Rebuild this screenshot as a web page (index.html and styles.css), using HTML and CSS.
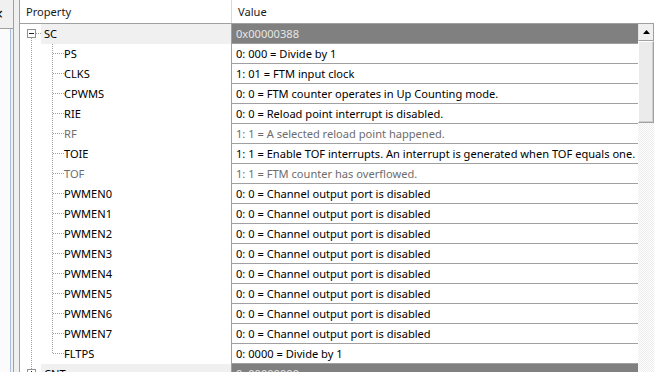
FILE: index.html
```html
<!DOCTYPE html>
<html>
<head>
<meta charset="utf-8">
<link rel="stylesheet" href="styles.css">
</head>
<body>
<div class="app">
  <div class="side">
    <div class="side-a">
      <div class="side-top"><span class="close">×</span></div>
      <div class="side-rest"></div>
    </div>
    <div class="side-b"></div>
  </div>
  <div class="grid">
    <div class="head">
      <div class="h-name">Property</div>
      <div class="h-val">Value</div>
    </div>
    <div class="body">
      <div class="rows">
        <div class="row group">
          <div class="name"><span class="g1 first"><span class="box minus"></span></span><span class="label">SC</span></div>
          <div class="val">0x00000388</div>
        </div>
        <div class="row">
          <div class="name"><span class="g1"></span><span class="g2"></span><span class="label">PS</span></div>
          <div class="val">0: 000 = Divide by 1</div>
        </div>
        <div class="row">
          <div class="name"><span class="g1"></span><span class="g2"></span><span class="label">CLKS</span></div>
          <div class="val">1: 01 = FTM input clock</div>
        </div>
        <div class="row">
          <div class="name"><span class="g1"></span><span class="g2"></span><span class="label">CPWMS</span></div>
          <div class="val">0: 0 = FTM counter operates in Up Counting mode.</div>
        </div>
        <div class="row">
          <div class="name"><span class="g1"></span><span class="g2"></span><span class="label">RIE</span></div>
          <div class="val">0: 0 = Reload point interrupt is disabled.</div>
        </div>
        <div class="row dis">
          <div class="name"><span class="g1"></span><span class="g2"></span><span class="label">RF</span></div>
          <div class="val">1: 1 = A selected reload point happened.</div>
        </div>
        <div class="row">
          <div class="name"><span class="g1"></span><span class="g2"></span><span class="label">TOIE</span></div>
          <div class="val">1: 1 = Enable TOF interrupts. An interrupt is generated when TOF equals one.</div>
        </div>
        <div class="row dis">
          <div class="name"><span class="g1"></span><span class="g2"></span><span class="label">TOF</span></div>
          <div class="val">1: 1 = FTM counter has overflowed.</div>
        </div>
        <div class="row">
          <div class="name"><span class="g1"></span><span class="g2"></span><span class="label">PWMEN0</span></div>
          <div class="val">0: 0 = Channel output port is disabled</div>
        </div>
        <div class="row">
          <div class="name"><span class="g1"></span><span class="g2"></span><span class="label">PWMEN1</span></div>
          <div class="val">0: 0 = Channel output port is disabled</div>
        </div>
        <div class="row">
          <div class="name"><span class="g1"></span><span class="g2"></span><span class="label">PWMEN2</span></div>
          <div class="val">0: 0 = Channel output port is disabled</div>
        </div>
        <div class="row">
          <div class="name"><span class="g1"></span><span class="g2"></span><span class="label">PWMEN3</span></div>
          <div class="val">0: 0 = Channel output port is disabled</div>
        </div>
        <div class="row">
          <div class="name"><span class="g1"></span><span class="g2"></span><span class="label">PWMEN4</span></div>
          <div class="val">0: 0 = Channel output port is disabled</div>
        </div>
        <div class="row">
          <div class="name"><span class="g1"></span><span class="g2"></span><span class="label">PWMEN5</span></div>
          <div class="val">0: 0 = Channel output port is disabled</div>
        </div>
        <div class="row">
          <div class="name"><span class="g1"></span><span class="g2"></span><span class="label">PWMEN6</span></div>
          <div class="val">0: 0 = Channel output port is disabled</div>
        </div>
        <div class="row">
          <div class="name"><span class="g1"></span><span class="g2"></span><span class="label">PWMEN7</span></div>
          <div class="val">0: 0 = Channel output port is disabled</div>
        </div>
        <div class="row">
          <div class="name"><span class="g1"></span><span class="g2 last"></span><span class="label">FLTPS</span></div>
          <div class="val">0: 0000 = Divide by 1</div>
        </div>
        <div class="row group">
          <div class="name"><span class="g1 mid"><span class="box plus"></span></span><span class="label">CNT</span></div>
          <div class="val">0x00000000</div>
        </div>
      </div>
      <div class="scroll">
        <div class="sb-btn"><svg width="7" height="4" viewBox="0 0 7 4"><path d="M0 4 L3.5 0 L7 4 Z" fill="#000"/></svg></div>
        <div class="sb-thumb"></div>
        <div class="sb-track"></div>
      </div>
    </div>
  </div>
</div>
</body>
</html>
```

FILE: styles.css
```css
* { box-sizing: border-box; }
html, body {
  margin: 0;
  padding: 0;
  width: 654px;
  height: 372px;
  overflow: hidden;
  background: #fff;
  font-family: "Noto Sans", "Open Sans", sans-serif;
  font-size: 11.1px;
  color: #000;
}
.app {
  display: flex;
  width: 654px;
  height: 372px;
}
.side {
  width: 20px;
  display: flex;
  flex: none;
}
.side-a {
  width: 14px;
  display: flex;
  flex-direction: column;
  border-right: 1px solid #a0a0a0;
}
.side-top {
  height: 29px;
  background: #f0f0f0;
  border-bottom: 1px solid #a0a0a0;
  overflow: hidden;
  line-height: 28px;
  font-size: 16px;
}
.close {
  display: inline-block;
  margin-left: -6px;
  color: #000;
}
.side-rest {
  flex: 1;
  background: linear-gradient(to right, #fbfbfb 0 10px, #a9bfdc 10px 11px, #f0f0f0 11px);
}
.side-b {
  width: 6px;
  background: #f0f0f0;
  border-right: 1px solid #a0a0a0;
}
.grid {
  flex: 1;
  display: flex;
  flex-direction: column;
  min-width: 0;
}
.head {
  height: 24px;
  display: flex;
  border-bottom: 1px solid #a0a0a0;
  line-height: 23px;
  color: #1a1a1a;
}
.h-name {
  width: 212px;
  padding-left: 6px;
  border-right: 1px solid #d9d9d9;
}
.h-val {
  flex: 1;
  padding-left: 6px;
}
.body {
  flex: 1;
  display: flex;
  min-height: 0;
}
.rows {
  flex: 1;
  overflow: hidden;
}
.row {
  display: flex;
  height: 20px;
  line-height: 19px;
}
.name {
  width: 211px;
  display: flex;
  flex: none;
  white-space: nowrap;
}
.val {
  flex: 1;
  border-left: 1px solid #a0a0a0;
  border-bottom: 1px solid #a0a0a0;
  padding-left: 4px;
  white-space: nowrap;
  overflow: hidden;
}
.label { padding-left: 0; }
.group .label {
  flex: 1;
  background: #f0f0f0;
  padding-left: 3px;
}
.group .val {
  background: #808080;
  color: #e6e6e6;
}
.dis .label, .dis .val { color: #6d6d6d; }

.g1, .g2 {
  display: flex;
  align-items: center;
  flex: none;
  height: 20px;
  background-repeat: no-repeat;
}
.g1 {
  width: 21px;
  background-image: repeating-linear-gradient(to bottom, #a0a0a0 0 1px, transparent 1px 2px);
  background-size: 1px 20px;
  background-position: 11px 0;
}
.g1.first {
  background-image:
    repeating-linear-gradient(to bottom, #a0a0a0 0 1px, transparent 1px 2px),
    repeating-linear-gradient(to right, #a0a0a0 0 1px, transparent 1px 2px);
  background-size: 1px 6px, 6px 1px;
  background-position: 11px 14px, 16px 9px;
}
.g1.mid {
  background-image:
    repeating-linear-gradient(to bottom, #a0a0a0 0 1px, transparent 1px 2px),
    repeating-linear-gradient(to bottom, #a0a0a0 0 1px, transparent 1px 2px),
    repeating-linear-gradient(to right, #a0a0a0 0 1px, transparent 1px 2px);
  background-size: 1px 5px, 1px 6px, 6px 1px;
  background-position: 11px 0, 11px 14px, 16px 9px;
}
.g2 {
  width: 23px;
  background-image:
    repeating-linear-gradient(to bottom, #a0a0a0 0 1px, transparent 1px 2px),
    repeating-linear-gradient(to right, #a0a0a0 0 1px, transparent 1px 2px);
  background-size: 1px 20px, 11px 1px;
  background-position: 11px 0, 12px 9px;
}
.g2.last {
  background-size: 1px 10px, 11px 1px;
}
.box {
  width: 9px;
  height: 9px;
  margin-left: 7px;
  margin-top: -1px;
  border: 1px solid #919191;
  background: #fff linear-gradient(#222, #222) no-repeat 1px 3px / 5px 1px;
}
.box.plus {
  background:
    linear-gradient(#222, #222) no-repeat 1px 3px / 5px 1px,
    linear-gradient(#222, #222) no-repeat 3px 1px / 1px 5px;
  background-color: #fff;
}

.scroll {
  width: 16px;
  flex: none;
  display: flex;
  flex-direction: column;
}
.sb-btn {
  height: 17px;
  background: #f0f0f0;
  border-left: 1px solid #e3e3e3;
  border-bottom: 1px solid #a0a0a0;
  border-right: 1px solid #a0a0a0;
  display: flex;
  align-items: center;
  justify-content: center;
}
.sb-thumb {
  height: 82px;
  background: #ebebeb;
  border: 1px solid #a0a0a0;
  border-top-color: #fff;
  border-left-color: #fff;
  box-shadow: inset -1px -1px 0 #d0d0d0;
}
.sb-track {
  flex: 1;
  background: repeating-conic-gradient(#ececec 0 25%, #ffffff 0 50%) 0 0 / 2px 2px;
}
```
